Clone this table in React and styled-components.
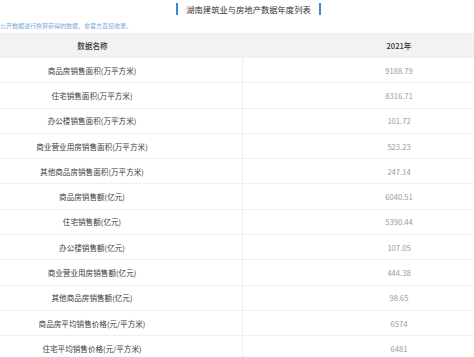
import React from "react";
import styled, { createGlobalStyle } from "styled-components";

const Global = createGlobalStyle`
  html, body { margin: 0; padding: 0; background: #ffffff; overflow: hidden; }
  body { font-family: "Noto Sans CJK SC", "Noto Sans", sans-serif; }
`;

const Page = styled.div`
  width: 613px;
  margin-left: -58px;
  display: flex;
  flex-direction: column;
`;

const TitleBar = styled.div`
  height: 18px;
  display: flex;
  align-items: center;
  justify-content: center;
  gap: 8px;
`;

const Accent = styled.span`
  width: 2px;
  height: 12px;
  background: #3d87e0;
`;

const Title = styled.h1`
  margin: 0;
  font-size: 8.3px;
  line-height: 12px;
  font-weight: 400;
  color: #333333;
`;

const Note = styled.p`
  margin: 0;
  height: 15px;
  padding-left: 58px;
  font-size: 6px;
  line-height: 15px;
  color: #7ea7d8;
  white-space: nowrap;
`;

const Table = styled.div`
  display: flex;
  flex-direction: column;
`;

const Row = styled.div`
  display: grid;
  grid-template-columns: 301px 312px;
  height: ${(p) => (p.$head ? "25px" : "25.3px")};
  box-sizing: border-box;
  background: ${(p) => (p.$head ? "#f2f2f2" : "#ffffff")};
  border-bottom: 1px solid ${(p) => (p.$head ? "#f2f2f2" : "#efefef")};
`;

const Cell = styled.div`
  display: flex;
  align-items: center;
  justify-content: center;
  font-size: 7.6px;
  color: ${(p) => (p.$value ? "#9a9a9a" : "#3a3a3a")};
  border-right: ${(p) => (p.$divider ? "1px solid #efefef" : "none")};
  white-space: nowrap;
`;

const HeadCell = styled(Cell)`
  color: #333333;
  font-weight: 500;
`;

const data = [
  ["商品房销售面积(万平方米)", "9188.79"],
  ["住宅销售面积(万平方米)", "8316.71"],
  ["办公楼销售面积(万平方米)", "101.72"],
  ["商业营业用房销售面积(万平方米)", "523.23"],
  ["其他商品房销售面积(万平方米)", "247.14"],
  ["商品房销售额(亿元)", "6040.51"],
  ["住宅销售额(亿元)", "5390.44"],
  ["办公楼销售额(亿元)", "107.05"],
  ["商业营业用房销售额(亿元)", "444.38"],
  ["其他商品房销售额(亿元)", "98.65"],
  ["商品房平均销售价格(元/平方米)", "6574"],
  ["住宅平均销售价格(元/平方米)", "6481"],
];

export default function App() {
  return (
    <>
      <Global />
      <Page>
        <TitleBar>
          <Accent />
          <Title>湖南建筑业与房地产数据年度列表</Title>
          <Accent />
        </TitleBar>
        <Note>公开数据进行换算获得的数据，非官方直接收录。</Note>
        <Table>
          <Row $head>
            <HeadCell>数据名称</HeadCell>
            <HeadCell>2021年</HeadCell>
          </Row>
          {data.map(([name, value]) => (
            <Row key={name}>
              <Cell $divider>{name}</Cell>
              <Cell $value>{value}</Cell>
            </Row>
          ))}
        </Table>
      </Page>
    </>
  );
}
